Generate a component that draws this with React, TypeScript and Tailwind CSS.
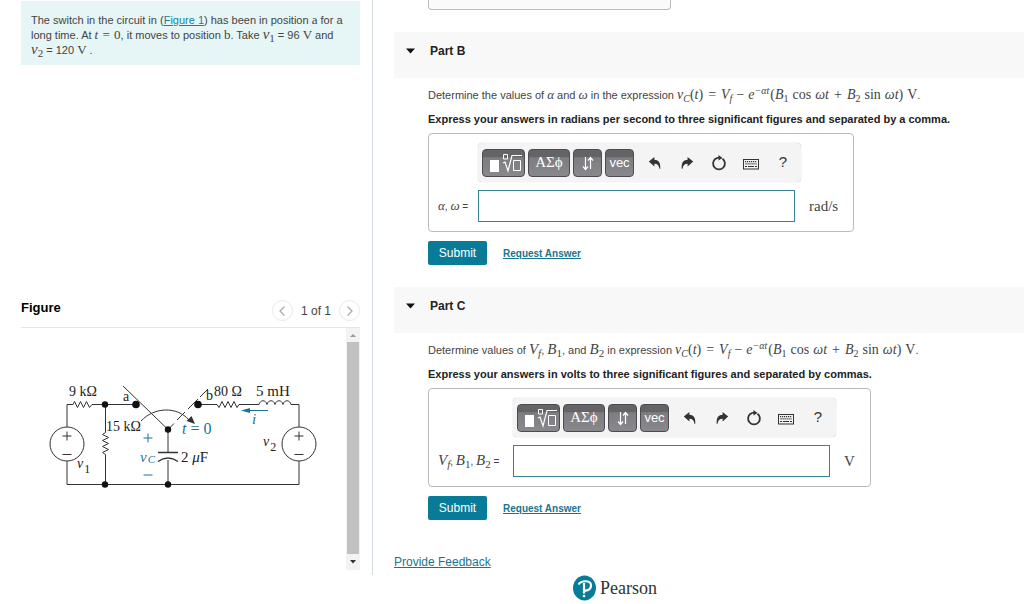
import { useState, type ReactNode } from "react";
import { clsx } from "clsx";

function MathText({ children, className }: { children: ReactNode; className?: string }) {
  return (
    <span className={clsx("font-['Liberation_Serif',serif]", className)}>
      {children}
    </span>
  );
}

function Var({ name, sub }: { name: string; sub?: string }) {
  return (
    <MathText className={clsx("leading-none", sub ? "text-[15px]" : "text-[13px]")}>
      <i>{name}</i>
      {sub && (
        <sub className={clsx("text-[11px] leading-none", sub === "f" && "italic")}>{sub}</sub>
      )}
    </MathText>
  );
}

function VoltageExpression() {
  return (
    <MathText className="text-[14px] leading-none whitespace-nowrap">
      <i>v</i>
      <sub className="text-[10px] italic leading-none">C</sub>(<i>t</i>)
      <span className="mx-[5px]">=</span>
      <i>V</i>
      <sub className="text-[10px] italic leading-none">f</sub>
      <span className="mx-1">−</span>
      <i>e</i>
      <sup className="text-[10px] italic leading-none">−αt</sup>
      <span className="ml-px">(</span>
      <i>B</i>
      <sub className="text-[10px] leading-none">1</sub>
      <span className="mx-1">cos</span>
      <i>ωt</i>
      <span className="mx-[5px]">+</span>
      <i>B</i>
      <sub className="text-[10px] leading-none">2</sub>
      <span className="mx-1">sin</span>
      <i>ωt</i>)<span className="ml-1">V</span>
    </MathText>
  );
}

function TemplateIcon() {
  return (
    <svg width="36" height="24" viewBox="0 0 36 24" fill="none" stroke="#fff">
      <rect x="4" y="9" width="9" height="12" fill="#fff" stroke="none" />
      <path d="M17.5 3.500h4v4.500h-4z" strokeWidth="1" />
      <path d="M17 12l2-1 3 9 4-15.500h10" strokeWidth="1.200" />
      <path d="M27.500 9.500h7v10h-7z" strokeWidth="1" />
    </svg>
  );
}

function ArrowsIcon() {
  return (
    <svg width="14" height="16" viewBox="0 0 14 16" fill="none" stroke="#fff" strokeWidth="1.200">
      <path d="M4.500 2v12M2 11.500l2.500 3 2.500-3M9.500 14V3M7 5.500l2.500-3 2.500 3" />
    </svg>
  );
}

function UndoIcon({ flipped }: { flipped?: boolean }) {
  return (
    <svg width="14" height="14" viewBox="0 0 14 14" fill="#333" className={clsx(flipped && "-scale-x-100")}>
      <path d="M0.800 5.600L6.400 1v2.700C10.300 3.800 12.700 6 12.300 12.800L11.400 12.800C11 9.300 9.500 7.700 6.400 7.700v2.900z" />
    </svg>
  );
}

function ResetIcon() {
  return (
    <svg width="16" height="16" viewBox="0 0 16 16" fill="none" stroke="#333" strokeWidth="1.800">
      <path d="M4.500 3.800A5.900 5.900 0 1 0 11.500 3.800" />
      <path d="M4.300 4A5.900 5.900 0 0 1 8.500 2.700" />
      <path d="M7.500 0l4 2.900-4 2.700z" fill="#333" stroke="none" />
    </svg>
  );
}

function KeyboardIcon() {
  return (
    <svg width="16" height="14" viewBox="0 0 16 14" fill="none" stroke="#333">
      <rect x="0.500" y="3.500" width="15" height="9.500" />
      <path d="M2 5.700h12M2.500 7.800h11" strokeWidth="1.200" strokeDasharray="1.200 0.800" />
      <path d="M2 10.500h2M5 10.500h6M12 10.500h2" strokeWidth="1.200" />
    </svg>
  );
}

const darkButton =
  "flex h-7 items-center justify-center rounded border border-[#4c4c50] bg-linear-to-b from-[#646466] from-25% via-[#7d7d81] via-30% to-[#88888d] text-white";
const plainButton = "flex h-7 w-6 items-center justify-center text-[#333]";

function Toolbar() {
  return (
    <div className="flex h-[39px] w-fit items-center rounded bg-[#f4f4f4] pl-1 pr-[6px] shadow-[0_0_1px_#aaa]">
      <div className="flex gap-[3px]">
        <button aria-label="Templates" className={clsx(darkButton, "w-[43px]")}>
          <TemplateIcon />
        </button>
        <button className={clsx(darkButton, "w-[42px] font-['Liberation_Serif',serif] text-[15px]")}>
          ΑΣϕ
        </button>
        <button aria-label="Arrows" className={clsx(darkButton, "w-[29px]")}>
          <ArrowsIcon />
        </button>
        <button className={clsx(darkButton, "w-[29px] text-[13px]")}>vec</button>
      </div>
      <div className="ml-[9px] flex gap-2">
        <button aria-label="Undo" className={plainButton}>
          <UndoIcon />
        </button>
        <button aria-label="Redo" className={plainButton}>
          <UndoIcon flipped />
        </button>
        <button aria-label="Reset" className={plainButton}>
          <ResetIcon />
        </button>
        <button aria-label="Keyboard" className={plainButton}>
          <KeyboardIcon />
        </button>
        <button className={clsx(plainButton, "text-[15px]")}>?</button>
      </div>
    </div>
  );
}

type PartProps = {
  id: string;
  title: string;
  question: ReactNode;
  instruction: string;
  label: ReactNode;
  labelWidth: string;
  unit: string;
};

function Part({ id, title, question, instruction, label, labelWidth, unit }: PartProps) {
  const [open, setOpen] = useState(true);
  const [answer, setAnswer] = useState("");

  return (
    <section className="mb-[22px]">
      <h2 className="bg-[#f8f8f8]">
        <button
          aria-expanded={open}
          onClick={() => setOpen(!open)}
          className="flex h-[46px] w-full items-start pl-3 pt-[11px] text-left text-[12px] leading-4 font-bold text-[#222]"
        >
          <svg width="9" height="16" viewBox="0 0 9 16" fill="#111" className="mr-[15px]">
            <path d="M0 5.500h9L4.500 10.500z" />
          </svg>
          {title}
        </button>
      </h2>

      {open && (
        <div className="pl-[34px] pt-[9px]">
          <p className="h-4 text-[11px] leading-4">{question}</p>
          <p className="mt-2 text-[11px] leading-4 font-bold text-[#222]">{instruction}</p>

          <div className="mt-[6px] flex w-fit items-end rounded border border-[#bbb] py-[9px] pl-[9px] pr-[15px]">
            <label
              htmlFor={id}
              className={clsx("flex h-8 items-center whitespace-nowrap text-[10px]", labelWidth)}
            >
              <span>{label} =</span>
            </label>
            <div>
              <Toolbar />
              <input
                id={id}
                type="text"
                value={answer}
                onChange={(e) => setAnswer(e.target.value)}
                className="mt-2 block h-8 w-[317px] border border-[#3b8297] bg-white px-2 text-sm outline-none"
              />
            </div>
            <MathText className="ml-2 flex h-8 items-center text-[15px]">{unit}</MathText>
          </div>

          <div className="mt-[9px] flex items-center gap-4">
            <button className="h-6 w-[59px] rounded-xs bg-[#087b98] text-[12px] text-white">
              Submit
            </button>
            <a href="#" className="text-[10px] font-bold text-[#19758f] underline">
              Request Answer
            </a>
          </div>
        </div>
      )}
    </section>
  );
}

function Circuit() {
  return (
    <svg
      width="325"
      height="242"
      viewBox="21 328 325 242"
      fill="none"
      stroke="#333"
      strokeWidth="1"
      className="font-['Liberation_Serif',serif] text-[14px]"
      role="img"
      aria-label="Circuit"
    >
      <path d="M67 427v-22.500h6l1.500-3 3 6 3-6 3 6 3-6 3 6 2.500-3H134" />
      <path d="M105.500 404.500v28l-3 2 6 3-6 3 6 3-6 3 6 3-6 3 3 2V484.500" />
      <path d="M67 461v23.500h232V461M299 427v-22.500h-8c-1-5-7-5-8 0c-1-5-7-5-8 0c-1-5-7-5-8 0c-1-5-7-5-8 0H239l-2 3-3-6-3 6-3-6-3 6-3-6-3 6-2-3H198" />
      <circle cx="67" cy="444" r="17" />
      <circle cx="299" cy="444" r="17" />
      <path d="M62.500 436h9M67 431.500v9M62.500 454.500h9M294.500 436h9M299 431.500v9M294.500 454.500h9" />
      <path d="M123 386l45 43.500V452M168 460v24.500" />
      <path d="M168 429.500l6-6M177 420l8-8M188 409l10-10M200 397l8-8" />
      <path d="M158 452.500h20M158 461.500q10-7 20 0" strokeWidth="1.500" />
      <path d="M141 421c13-14 36-15 48-1" />
      <path d="M195 424l-8.500-3 5-5z" fill="#333" stroke="none" />
      <g fill="#111" stroke="none">
        <circle cx="105" cy="404.500" r="3.200" />
        <circle cx="136" cy="404.500" r="3.800" />
        <circle cx="198" cy="404.500" r="3.800" />
        <circle cx="168" cy="429.500" r="3.200" />
        <circle cx="105" cy="484.500" r="3.200" />
        <circle cx="168" cy="484.500" r="3.200" />
      </g>
      <path d="M268 410.500h-20" stroke="#1b7399" />
      <path d="M241 410.500l9-2.500v5z" fill="#1b7399" stroke="none" />
      <path d="M143.500 438h9M148 433.500v9M143.500 475h9" stroke="#1b7399" />
      <g fill="#222" stroke="none">
        <text x="69" y="396">9 kΩ</text>
        <text x="123" y="401">a</text>
        <text x="206" y="400">b</text>
        <text x="214" y="396">80 Ω</text>
        <text x="256" y="396" fontSize="15">5 mH</text>
        <text x="106" y="431">15 kΩ</text>
        <text x="181" y="462" fontSize="15">2 <tspan fontStyle="italic">μ</tspan>F</text>
        <text x="77" y="468"><tspan fontStyle="italic">v</tspan><tspan dx="1" dy="5" fontSize="12">1</tspan></text>
        <text x="263" y="446"><tspan fontStyle="italic">v</tspan><tspan dx="1" dy="5" fontSize="12">2</tspan></text>
      </g>
      <g fill="#1b7399" stroke="none">
        <text x="182" y="434" fontSize="16"><tspan fontStyle="italic">t</tspan> = 0</text>
        <text x="252" y="424" fontStyle="italic" fontSize="15">i</text>
        <text x="140" y="462" fontStyle="italic" fontSize="15">v<tspan dx="1" dy="1" fontSize="11">C</tspan></text>
      </g>
    </svg>
  );
}

const pagerButton =
  "flex size-[21px] items-center justify-center rounded-full border border-[#e8e8e8] text-[#aaa]";

function Chevron({ d }: { d: string }) {
  return (
    <svg width="8" height="12" viewBox="0 0 8 12" fill="none" stroke="currentColor" strokeWidth="1.300">
      <path d={d} />
    </svg>
  );
}

function FigurePanel() {
  return (
    <section className="mt-[235px]">
      <div className="flex items-start justify-between border-b border-[#e6e6e6] pb-[6px]">
        <h2 className="text-[13px] leading-4 font-bold text-black">Figure</h2>
        <div className="flex items-center gap-2 text-[12px]">
          <button aria-label="Previous" className={pagerButton}>
            <Chevron d="M6.500 1.500L2 6l4.500 4.500" />
          </button>
          <span>1 of 1</span>
          <button aria-label="Next" className={pagerButton}>
            <Chevron d="M1.500 1.500L6 6l-4.500 4.500" />
          </button>
        </div>
      </div>
      <div className="flex">
        <Circuit />
        <div className="flex w-[14px] flex-col items-center bg-[#f3f3f3]">
          <svg width="14" height="14" viewBox="0 0 14 14" fill="#999">
            <path d="M4 9h6L7 6z" />
          </svg>
          <div className="w-3 flex-1 bg-[#c1c1c1]" />
          <svg width="14" height="16" viewBox="0 0 14 16" fill="#333">
            <path d="M4 6h6L7 9.500z" />
          </svg>
        </div>
      </div>
    </section>
  );
}

export default function App() {
  return (
    <div className="overflow-hidden bg-white font-['Liberation_Sans',Arial,sans-serif] text-[#444]">
      <div className="flex items-start">
        <aside className="w-[373px] shrink-0 border-r border-[#d3dce2] pb-[5px] pl-[21px] pr-3 pt-px">
          <div className="bg-[#e6f5f5] px-[10px] pb-2 pt-3 text-[11px] leading-[14px]">
            The switch in the circuit in (
            <a href="#" className="text-[#1c7f9c] underline">
              Figure 1
            </a>
            ) has been in position <MathText className="text-[13px] leading-none">a</MathText> for a
            long time. At{" "}
            <MathText className="text-[13px] leading-none">
              <i>t</i> <span className="mx-px">=</span> 0
            </MathText>
            , it moves to position <MathText className="text-[13px] leading-none">b</MathText>. Take{" "}
            <Var name="v" sub="1" /> = 96 <MathText className="text-[13px] leading-none">V</MathText> and{" "}
            <span className="whitespace-nowrap">
              <Var name="v" sub="2" /> = 120 <MathText className="text-[13px] leading-none">V</MathText> .
            </span>
          </div>
          <FigurePanel />
        </aside>

        <main className="min-w-0 flex-1 pl-[21px]">
          <div className="mb-[22px] ml-[34px] h-[10px] w-[243px] rounded-b border border-t-0 border-[#bbb] bg-[#fafafa]" />

          <Part
            id="part-b"
            title="Part B"
            question={
              <>
                Determine the values of <Var name="α" /> and <Var name="ω" /> in the expression{" "}
                <VoltageExpression />.
              </>
            }
            instruction="Express your answers in radians per second to three significant figures and separated by a comma."
            label={
              <>
                <Var name="α" />, <Var name="ω" />
              </>
            }
            labelWidth="w-10"
            unit="rad/s"
          />
          <Part
            id="part-c"
            title="Part C"
            question={
              <>
                Determine values of <Var name="V" sub="f" />, <Var name="B" sub="1" />, and{" "}
                <Var name="B" sub="2" /> in expression <VoltageExpression />.
              </>
            }
            instruction="Express your answers in volts to three significant figures and separated by commas."
            label={
              <>
                <Var name="V" sub="f" />, <Var name="B" sub="1" />, <Var name="B" sub="2" />
              </>
            }
            labelWidth="w-[75px]"
            unit="V"
          />

          <a href="#" className="mt-[34px] block w-fit text-[12px] leading-4 text-[#19758f] underline">
            Provide Feedback
          </a>
          <footer className="ml-[179px] mt-1 flex h-7 items-center gap-1">
            <svg width="23" height="26" viewBox="0 0 23 26" fill="none">
              <ellipse cx="11.500" cy="13" rx="11.500" ry="12.500" fill="#087b98" />
              <path d="M5.500 9.500c3-4.500 12.500-4.500 12.500 1c0 4-4 5.500-7 5M11 8v10.500" stroke="#fff" strokeWidth="2.200" />
              <circle cx="11" cy="21" r="1.300" fill="#fff" />
            </svg>
            <span className="font-['Liberation_Serif',serif] text-[18px] text-[#333]">Pearson</span>
          </footer>
        </main>
      </div>
    </div>
  );
}
